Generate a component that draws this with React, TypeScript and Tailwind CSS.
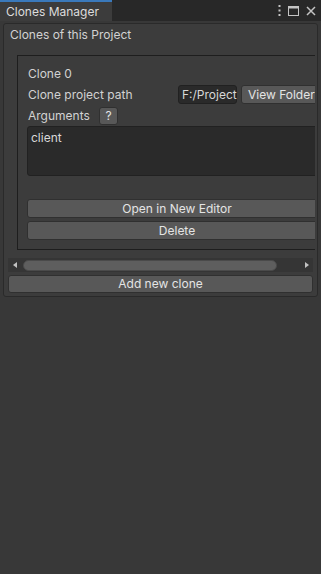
import React from 'react';

// Unity-style editor window: Clones Manager
const font = { fontFamily: 'Inter, "Noto Sans", sans-serif' };

const Btn: React.FC<{ className?: string; children: React.ReactNode }> = ({ className = '', children }) => (
  <div
    className={[
      'flex items-center justify-center rounded-[3px] border border-[#303030] bg-[#585858] text-[12px] text-[#e4e4e4]',
      className,
    ].join(' ')}
  >
    {children}
  </div>
);

const App: React.FC = () => {
  return (
    <div className="h-[574px] w-[321px] overflow-hidden bg-[#383838] text-[#d2d2d2]" style={font}>
      {/* tab bar */}
      <div className="flex h-[21px] items-stretch bg-[#282828]">
        <div className="flex w-[112px] items-center border-t-2 border-[#3a79bb] bg-[#3c3c3c] pl-[6px] text-[12px] text-[#dcdcdc]">
          Clones Manager
        </div>
        <div className="ml-auto flex items-center gap-[7px] pr-[5px] text-[#c4c4c4]">
          <svg width="3" height="11" viewBox="0 0 3 11">
            <rect x="0.5" y="0" width="2" height="2" fill="currentColor" />
            <rect x="0.5" y="4.5" width="2" height="2" fill="currentColor" />
            <rect x="0.5" y="9" width="2" height="2" fill="currentColor" />
          </svg>
          <svg width="11" height="10" viewBox="0 0 11 10">
            <rect x="0.5" y="0.5" width="10" height="9" fill="none" stroke="currentColor" />
            <rect x="0.5" y="0.5" width="10" height="2" fill="currentColor" />
          </svg>
          <svg width="10" height="10" viewBox="0 0 10 10">
            <path d="M1 1 L9 9 M9 1 L1 9" stroke="currentColor" strokeWidth="1.5" />
          </svg>
        </div>
      </div>

      {/* body */}
      <div className="px-[3px] pt-[2px]">
        <div className="rounded-[3px] border border-[#2a2a2a] bg-[#3c3c3c] pb-[3px]">
          <div className="flex h-[22px] items-center pl-[6px] text-[12px] text-[#d2d2d2]">Clones of this Project</div>

          <div className="ml-[4px] mr-[2px] overflow-hidden pt-[9px]">
            {/* clone box, wider than the view so it gets clipped */}
            <div className="ml-[9px] w-[330px] border border-[#1e1e1e] bg-[#3c3c3c] pb-[9px] pl-[9px] pt-[7px]">
              <div className="flex h-[21px] items-center pl-[1px] text-[12px]">Clone 0</div>
              <div className="flex h-[21px] items-center">
                <div className="w-[151px] pl-[1px] text-[12px]">Clone project path</div>
                <div className="flex h-[19px] w-[59px] items-center rounded-[3px] border border-[#212121] bg-[#2a2a2a] pl-[3px] text-[12px] text-[#d8d8d8]">
                  F:/Project
                </div>
                <Btn className="ml-[4px] h-[19px] w-[90px] justify-start pl-[6px]">View Folder</Btn>
              </div>
              <div className="flex h-[21px] items-center">
                <div className="w-[72px] pl-[1px] text-[12px]">Arguments</div>
                <Btn className="h-[18px] w-[19px]">?</Btn>
              </div>
              <div className="h-[50px] w-[300px] rounded-[3px] border border-[#212121] bg-[#2a2a2a] pl-[3px] pt-[2px] text-[12px] text-[#d8d8d8]">
                client
              </div>
              <div className="h-[23px]" />
              <Btn className="h-[19px] w-[300px]">Open in New Editor</Btn>
              <Btn className="mt-[3px] h-[19px] w-[300px]">Delete</Btn>
            </div>
          </div>

          {/* horizontal scrollbar */}
          <div className="mx-[4px] mt-[8px] flex h-[14px] items-center bg-[#353535]">
            <svg width="13" height="14" viewBox="0 0 13 14" className="text-[#c2c2c2]">
              <path d="M5 7 L9 4 L9 10 Z" fill="currentColor" />
            </svg>
            <div className="ml-[2px] h-[11px] w-[254px] rounded-full border border-[#4a4a4a] bg-[#5e5e5e]" />
            <svg width="13" height="14" viewBox="0 0 13 14" className="ml-auto text-[#c2c2c2]">
              <path d="M5 4 L9 7 L5 10 Z" fill="currentColor" />
            </svg>
          </div>

          <Btn className="mx-[4px] mt-[3px] h-[18px]">Add new clone</Btn>
        </div>
      </div>
    </div>
  );
};

export default App;
